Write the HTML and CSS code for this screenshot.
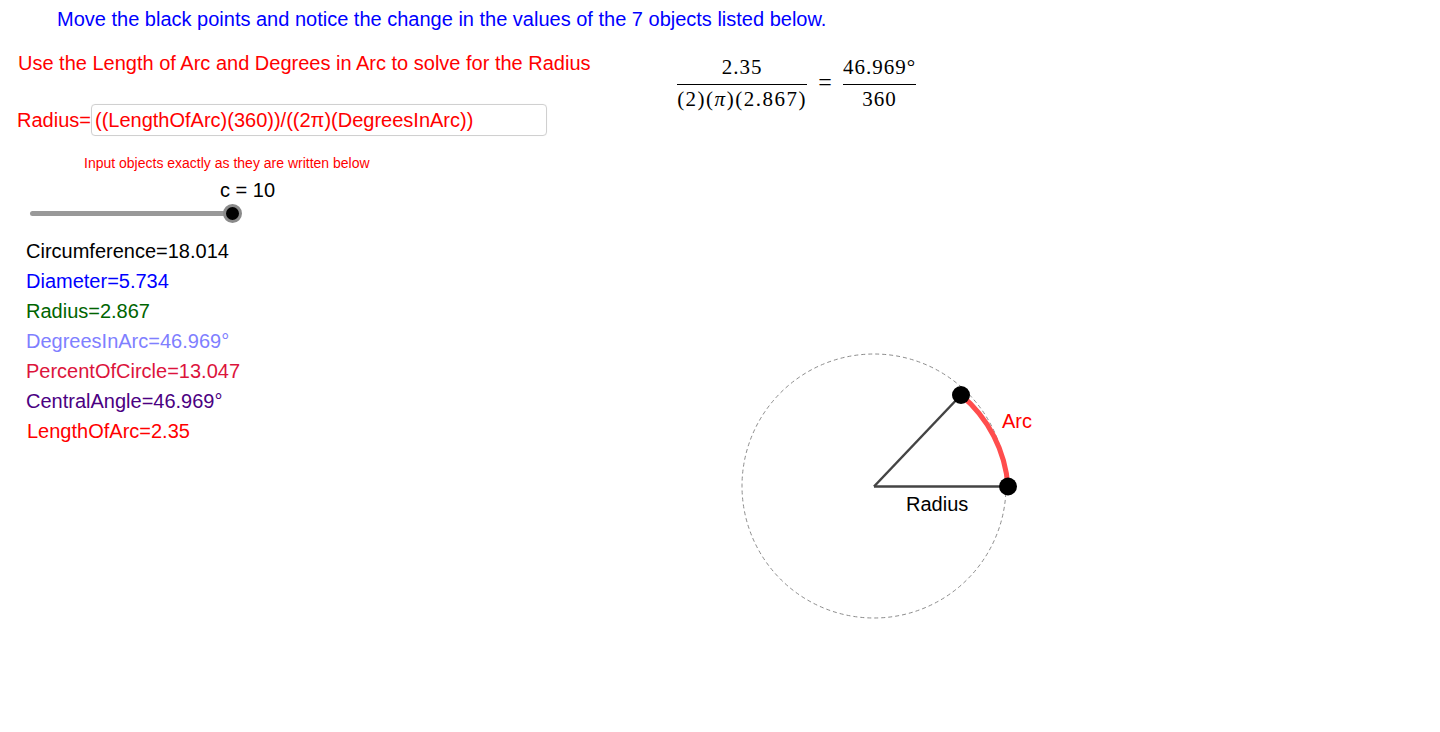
FILE: index.html
```html
<!DOCTYPE html>
<html>
<head>
<meta charset="utf-8">
<link rel="stylesheet" href="styles.css">
</head>
<body>
<div class="applet">
  <div class="title">Move the black points and notice the change in the values of the 7 objects listed below.</div>
  <div class="row">
    <div class="leftcol">
      <div class="instr">Use the Length of Arc and Degrees in Arc to solve for the Radius</div>
      <div class="inputrow">
        <span class="inlabel">Radius=</span>
        <div class="inbox">((LengthOfArc)(360))/((2π)(DegreesInArc))</div>
      </div>
      <div class="note">Input objects exactly as they are written below</div>
      <div class="sliderlabel">c = 10</div>
      <div class="slider"><div class="track"></div><div class="knob"></div></div>
      <ul class="values">
        <li class="c-black">Circumference=18.014</li>
        <li class="c-blue">Diameter=5.734</li>
        <li class="c-green">Radius=2.867</li>
        <li class="c-lblue">DegreesInArc=46.969°</li>
        <li class="c-crimson">PercentOfCircle=13.047</li>
        <li class="c-indigo">CentralAngle=46.969°</li>
        <li class="c-red">LengthOfArc=2.35</li>
      </ul>
    </div>
    <div class="equation">
      <div class="frac frac1"><div class="num">2.35</div><div class="den">(2)(<i>π</i>)(2.867)</div></div>
      <div class="eq">=</div>
      <div class="frac frac2"><div class="num">46.969°</div><div class="den">360</div></div>
    </div>
  </div>
  <svg class="canvas" width="1440" height="732" viewBox="0 0 1440 732">
    <circle cx="874" cy="486" r="132" fill="none" stroke="#8c8c8c" stroke-width="1" stroke-dasharray="4 3"/>
    <path d="M1008 486.5 A132 132 0 0 0 961 395" fill="none" stroke="#ff4d4d" stroke-width="5"/>
    <line x1="874" y1="486.5" x2="1008" y2="486.5" stroke="#444" stroke-width="2.5"/>
    <line x1="874" y1="486.5" x2="961" y2="395" stroke="#444" stroke-width="2.5"/>
    <circle cx="961" cy="395" r="9" fill="#000"/>
    <circle cx="1008" cy="486.5" r="9" fill="#000"/>
    <text x="1002" y="428" class="lbl-arc">Arc</text>
    <text x="906" y="511" class="lbl-rad">Radius</text>
  </svg>
</div>
</body>
</html>
```
FILE: styles.css
```css
html, body { margin: 0; padding: 0; background: #fff; }
.applet {
  position: relative;
  width: 1440px;
  height: 732px;
  overflow: hidden;
  font-family: "Liberation Sans", Arial, sans-serif;
  font-size: 20px;
  line-height: 22px;
}
.title {
  color: #0000ff;
  padding-left: 57px;
  padding-top: 8px;
  height: 22px;
}
.row {
  display: flex;
  margin-top: 22px;
}
.leftcol {
  width: 677px;
  flex: none;
}
.instr {
  color: #ff0000;
  padding-left: 18px;
  height: 22px;
}
.inputrow {
  display: flex;
  align-items: center;
  margin-top: 30px;
  height: 32px;
  padding-left: 17px;
  color: #ff0000;
}
.inlabel { width: 74px; }
.inbox {
  box-sizing: border-box;
  width: 456px;
  height: 32px;
  border: 1px solid #d0d0d0;
  border-radius: 4px;
  padding: 0 3px;
  line-height: 30px;
  color: #ff0000;
  box-shadow: 0 0 1px rgba(0,0,0,0.08);
}
.note {
  color: #ff0000;
  font-size: 14px;
  line-height: 16px;
  margin-top: 19px;
  padding-left: 84px;
}
.sliderlabel {
  margin-top: 8px;
  padding-left: 220px;
  color: #000;
}
.slider {
  position: relative;
  margin-top: 2px;
  height: 20px;
  margin-left: 30px;
  width: 212px;
}
.track {
  position: absolute;
  left: 0;
  top: 8px;
  width: 202px;
  height: 5px;
  border-radius: 3px;
  background: #999;
}
.knob {
  position: absolute;
  left: 193px;
  top: 1px;
  width: 13px;
  height: 13px;
  border-radius: 50%;
  background: #000;
  border: 3px solid #8a8a8a;
}
.values {
  list-style: none;
  margin: 13px 0 0 0;
  padding: 0 0 0 26px;
  line-height: 30px;
}
.values li:last-child { padding-left: 1px; }
.c-black { color: #000; }
.c-blue { color: #0000ff; }
.c-green { color: #006400; }
.c-lblue { color: #7f7fff; }
.c-crimson { color: #dc143c; }
.c-indigo { color: #4b0082; }
.c-red { color: #ff0000; }
.equation {
  display: flex;
  align-items: center;
  margin-top: 3px;
  font-family: "Liberation Serif", "Times New Roman", serif;
  font-size: 21px;
  line-height: 24px;
  color: #000;
  height: 56px;
}
.frac {
  display: flex;
  flex-direction: column;
  align-items: stretch;
  text-align: center;
}
.frac .num {
  padding-bottom: 5px;
  border-bottom: 1px solid #000;
}
.frac .den { padding-top: 2px; }
.frac1 { width: 130px; }
.frac1 .den { letter-spacing: 1.5px; }
.frac1 .num { letter-spacing: 1px; }
.frac2 { width: 73px; }
.frac2 .num { letter-spacing: 1px; }
.frac2 .den { letter-spacing: 1px; }
.eq { width: 36px; text-align: center; margin-top: -2px; font-size: 24px; }
.canvas {
  position: absolute;
  left: 0;
  top: 0;
}
.lbl-arc { fill: #ff0000; font-family: "Liberation Sans", Arial, sans-serif; font-size: 20px; }
.lbl-rad { fill: #000; font-family: "Liberation Sans", Arial, sans-serif; font-size: 20px; }
```
